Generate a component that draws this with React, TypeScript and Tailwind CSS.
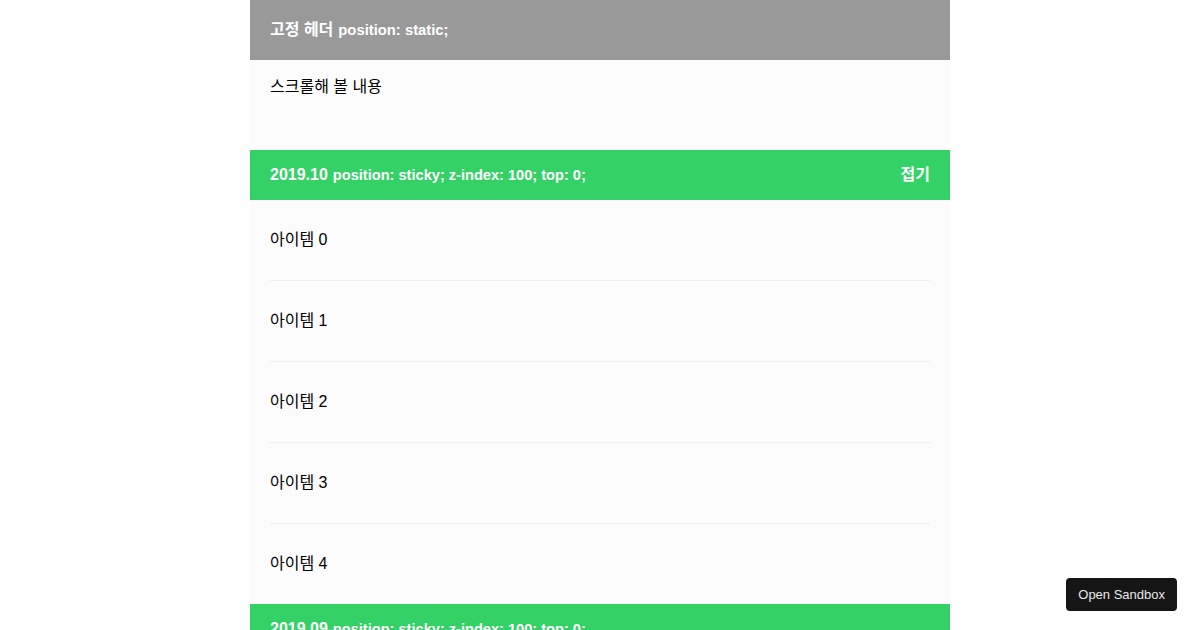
const font = { fontFamily: '"Liberation Sans", "Noto Sans CJK KR", Arial, sans-serif' };

function StickyHeader({ month, toggle }: { month: string; toggle?: boolean }) {
  return (
    <div className="sticky top-0 z-[100] flex h-[50px] items-center justify-between bg-[#34d166] px-5 text-white">
      <div className="flex items-baseline gap-[5px] font-bold">
        <span className="text-[16px]">{month}</span>
        <span className="text-[14.6px]">position: sticky; z-index: 100; top: 0;</span>
      </div>
      {toggle && <span className="text-[16px] font-bold">접기</span>}
    </div>
  );
}

function Item({ label, last }: { label: string; last?: boolean }) {
  return (
    <div className="px-5">
      <div
        className={`py-[30px] text-[16px] leading-[20px] text-black ${
          last ? '' : 'border-b border-[#efefef]'
        }`}
      >
        {label}
      </div>
    </div>
  );
}

export default function App() {
  const months = ['2019.10', '2019.09', '2019.08'];
  return (
    <div className="min-h-screen bg-white" style={font}>
      <div className="mx-auto w-[700px] bg-[#fcfcfc]">
        {/* static header */}
        <div className="flex h-[60px] items-center gap-[5px] bg-[#999999] px-5 font-bold text-white">
          <span className="text-[16px]">고정 헤더</span>
          <span className="text-[14.8px]">position: static;</span>
        </div>
        <div className="h-[90px] px-5 pt-[17px] text-[16px] leading-[20px] text-black">
          스크롤해 볼 내용
        </div>

        {months.map((m, idx) => (
          <section key={m}>
            <StickyHeader month={m} toggle={idx === 0} />
            {[0, 1, 2, 3, 4].map((i) => (
              <Item key={i} label={`아이템 ${i}`} last={i === 4} />
            ))}
          </section>
        ))}
      </div>

      {/* floating sandbox button */}
      <button className="fixed bottom-[19px] right-[23px] h-[33px] rounded-[4px] bg-[#151515] px-3 text-[13px] text-[#e8e8e8]">
        Open Sandbox
      </button>
    </div>
  );
}
